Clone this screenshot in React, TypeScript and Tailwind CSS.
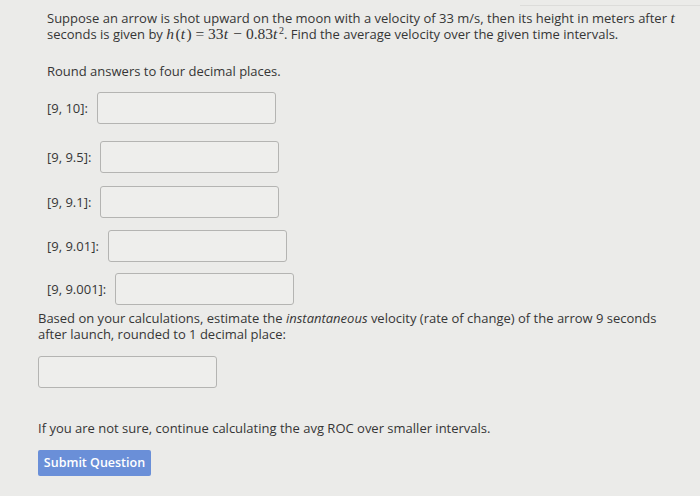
import React from 'react';

const rows = [
  { label: '[9, 10]:', mt: 'mt-[13px]' },
  { label: '[9, 9.5]:', mt: 'mt-[17px]' },
  { label: '[9, 9.1]:', mt: 'mt-[13px]' },
  { label: '[9, 9.01]:', mt: 'mt-[12px]' },
  { label: '[9, 9.001]:', mt: 'mt-[11px]' },
];

function Answer({ className = '' }: { className?: string }) {
  return (
    <div
      className={`h-[32px] w-[179px] rounded-[3px] border border-[#b4b4b2] bg-[#eeeeec] ${className}`}
    />
  );
}

const serif = "font-['Liberation_Serif',serif] text-[15.5px] leading-none text-[#333]";

function M({ children }: { children: React.ReactNode }) {
  return <span className={`${serif} inline-block pr-[1.5px] italic`}>{children}</span>;
}

export default function App() {
  return (
    <div className="h-[496px] w-[700px] overflow-hidden bg-[#ebebe9] font-['Open_Sans',sans-serif] text-[13px] leading-[16px] text-[#363636]">
      <div className="ml-[520px] h-[6px] border-b border-[#dcdcda]" />
      <div className="pl-[47px] pr-[16px] pt-[4px]">
        <p>
          Suppose an arrow is shot upward on the moon with a velocity of 33 m/s, then its height in meters after{' '}
          <M>t</M>
          <br />
          seconds is given by <M>h</M>
          <span className={serif}>(</span>
          <M>t</M>
          <span className={serif}>) = 33</span>
          <M>t</M>
          <span className={serif}> − 0.83</span>
          <M>t</M>
          <sup className="font-['Liberation_Serif',serif] text-[10px] leading-none">2</sup>. Find the average velocity over the given time intervals.
        </p>
        <p className="mt-[21px]">Round answers to four decimal places.</p>
        <div className="flex flex-col">
          {rows.map((r) => (
            <div key={r.label} className={`flex items-center gap-[9px] ${r.mt}`}>
              <span>{r.label}</span>
              <Answer />
            </div>
          ))}
        </div>
      </div>
      <div className="pl-[38px] pr-[16px] pt-[5px]">
        <p>
          Based on your calculations, estimate the <i>instantaneous</i> velocity (rate of change) of the arrow 9 seconds
          <br />
          after launch, rounded to 1 decimal place:
        </p>
        <Answer className="mt-[14px] w-[174px]" />
        <p className="mt-[32px]">If you are not sure, continue calculating the avg ROC over smaller intervals.</p>
        <button
          type="button"
          className="mt-[14px] h-[26px] w-[113px] rounded-[2px] bg-[#6a8fd8] text-[12.5px] font-semibold text-white"
        >
          Submit Question
        </button>
      </div>
    </div>
  );
}
